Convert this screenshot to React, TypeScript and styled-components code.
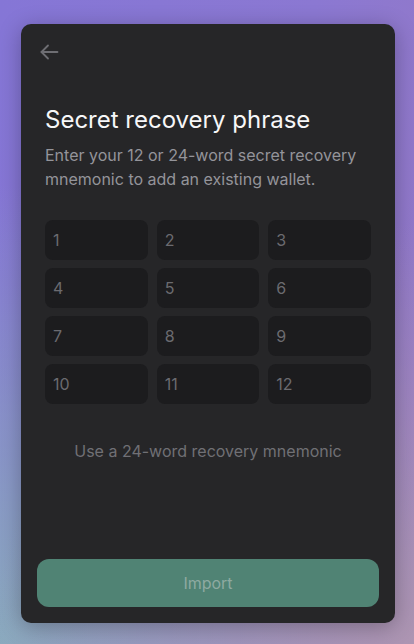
import * as React from 'react'
import styled, { createGlobalStyle } from 'styled-components'

const GlobalStyle = createGlobalStyle`
    html, body {
        margin: 0;
        padding: 0;
    }
    body {
        font-family: Inter, "Noto Sans", sans-serif;
        -webkit-font-smoothing: antialiased;
    }
`

const Page = styled.div`
    box-sizing: border-box;
    width: 100%;
    min-height: 100vh;
    padding: 24px 19px 21px 21px;
    display: flex;
    background:
        radial-gradient(circle at 100% 100%, rgba(176, 152, 176, 0.9) 0%, rgba(176, 152, 176, 0) 55%),
        radial-gradient(circle at 0% 100%, rgba(138, 170, 190, 1) 0%, rgba(138, 170, 190, 0) 60%),
        linear-gradient(100deg, #8576d6 0%, #8b78d2 60%, #9479c6 100%);
`

const Card = styled.div`
    box-sizing: border-box;
    flex: 1;
    display: flex;
    flex-direction: column;
    padding: 16px;
    background: #262628;
    border-radius: 10px;
    box-shadow: 0 4px 22px rgba(0, 0, 0, 0.28);
`

const Header = styled.div`
    height: 24px;
    display: flex;
    align-items: center;
    padding: 0 0 0 3px;
`

const BackButton = styled.button`
    border: none;
    background: none;
    padding: 0;
    display: flex;
    cursor: pointer;
    color: #6e6e73;
`

const Content = styled.div`
    padding: 0 8px;
    display: flex;
    flex-direction: column;
`

const Title = styled.h1`
    margin: 40px 0 0;
    font-size: 24px;
    font-weight: 400;
    line-height: 32px;
    color: #f7f7f8;
`

const Subtitle = styled.p`
    margin: 7px 0 0;
    font-size: 16px;
    line-height: 24px;
    color: #94949a;
`

const Grid = styled.div`
    margin-top: 29px;
    display: grid;
    grid-template-columns: repeat(3, 1fr);
    column-gap: 9px;
    row-gap: 8px;
`

const WordInput = styled.input`
    box-sizing: border-box;
    min-width: 0;
    height: 40px;
    border: none;
    outline: none;
    border-radius: 8px;
    background: #1c1c1e;
    padding: 0 8px;
    font-family: Inter, "Noto Sans", sans-serif;
    font-size: 16px;
    color: #e4e4e7;
    &::placeholder {
        color: #6b6b70;
    }
`

const Toggle = styled.button`
    margin-top: 36px;
    border: none;
    background: none;
    font-family: Inter, "Noto Sans", sans-serif;
    font-size: 16px;
    line-height: 20px;
    color: #707075;
    cursor: pointer;
    align-self: center;
`

const Spacer = styled.div`
    flex: 1;
`

const ImportButton = styled.button`
    height: 48px;
    border: none;
    border-radius: 12px;
    background: #508374;
    font-family: Inter, "Noto Sans", sans-serif;
    font-size: 16px;
    color: #8eaaa1;
    cursor: not-allowed;
`

const ArrowLeft: React.FC = () => (
    <svg width="19" height="16" viewBox="0 0 19 16" fill="none" stroke="currentColor"
        strokeWidth="1.8" strokeLinecap="round" strokeLinejoin="round">
        <path d="M17.5 8H1.5" />
        <path d="M8 1.5L1.5 8L8 14.5" />
    </svg>
)

const App: React.FC = (): JSX.Element => {
    const words = Array.from({ length: 12 }, (_, i) => i + 1)

    return (
        <>
            <GlobalStyle />
            <Page>
                <Card>
                    <Header>
                        <BackButton aria-label="Back">
                            <ArrowLeft />
                        </BackButton>
                    </Header>
                    <Content>
                        <Title>Secret recovery phrase</Title>
                        <Subtitle>
                            Enter your 12 or 24-word secret recovery mnemonic to add an existing wallet.
                        </Subtitle>
                        <Grid>
                            {words.map((n) => (
                                <WordInput key={n} placeholder={String(n)} />
                            ))}
                        </Grid>
                        <Toggle>Use a 24-word recovery mnemonic</Toggle>
                    </Content>
                    <Spacer />
                    <ImportButton disabled>Import</ImportButton>
                </Card>
            </Page>
        </>
    )
}

export default App
